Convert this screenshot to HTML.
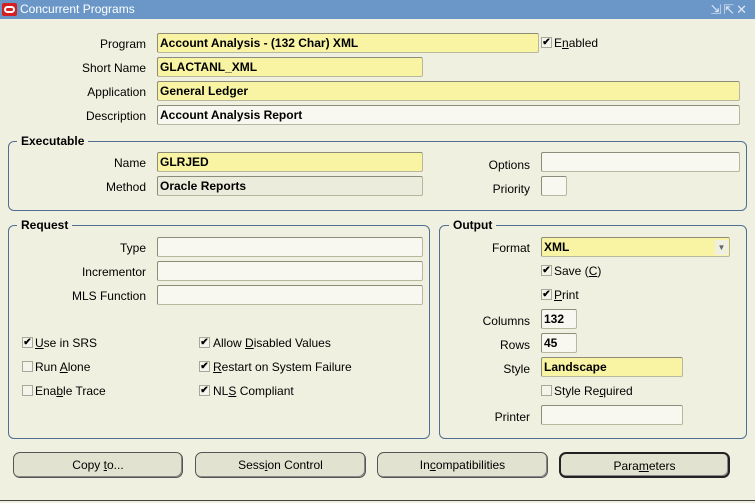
<!DOCTYPE html>
<html><head><style>
*{box-sizing:border-box;margin:0;padding:0}
body{width:755px;height:503px;background:#f0f0e0;font-family:"Liberation Sans",Arial,sans-serif;font-size:12px;color:#000;position:relative;overflow:hidden}
.a{position:absolute}
.title{left:0;top:0;width:755px;height:19px;background:#6a97c7;color:#fff;font-size:12px;line-height:19px;padding-left:20px}
.logo{left:2px;top:3px;width:15px;height:13px;background:#d32020;border-radius:2px}
.logo:after{content:"";position:absolute;left:2px;top:3px;width:11px;height:7px;border:2px solid #fff;border-radius:4px;box-sizing:border-box}
.lbl{text-align:right;width:140px;height:20px;line-height:20px}
.f{height:20px;border:1px solid #b8b8a0;border-top-color:#8c8c78;border-left-color:#8c8c78;background:#f8f8f0;font-weight:bold;padding-left:2px;line-height:18px;border-radius:2px}
.y{background:#f8f4a4}
.g{background:#ececdc}
.box{border:1px solid #4e6f93;border-radius:6px}
.leg{background:#f0f0e0;font-weight:bold;padding:0 4px;line-height:14px}
.cb{width:11px;height:11px;border:1px solid #a8a898;background:#f4f4ea;font-size:10px;line-height:9px;text-align:center;font-weight:bold}
.ct{height:14px;line-height:14px}
.btn{height:26px;top:452px;border:1px solid #555;border-radius:7px;background:#e2e2d0;text-align:center;line-height:24px;box-shadow:inset -1px -1px 0 #888}
u{text-decoration:underline}
</style></head><body>
<div class="a title">Concurrent Programs</div><div class="a logo"></div>
<div class="a" style="right:6px;top:1px;color:#dfe8f2;font-size:13px;line-height:17px;letter-spacing:2px">⇲⇱✕</div>

<div class="a lbl" style="left:6px;top:34px">Program</div>
<div class="a f y" style="left:157px;top:33px;width:382px">Account Analysis - (132 Char) XML</div>
<div class="a cb" style="left:541px;top:37px">✔</div><div class="a ct" style="left:554px;top:36px">E<u>n</u>abled</div>
<div class="a lbl" style="left:6px;top:58px">Short Name</div>
<div class="a f y" style="left:157px;top:57px;width:266px">GLACTANL_XML</div>
<div class="a lbl" style="left:6px;top:82px">Application</div>
<div class="a f y" style="left:157px;top:81px;width:583px">General Ledger</div>
<div class="a lbl" style="left:6px;top:106px">Description</div>
<div class="a f" style="left:157px;top:105px;width:583px">Account Analysis Report</div>

<div class="a box" style="left:8px;top:141px;width:739px;height:70px"></div>
<div class="a leg" style="left:17px;top:134px">Executable</div>
<div class="a lbl" style="left:6px;top:153px">Name</div>
<div class="a f y" style="left:157px;top:152px;width:266px">GLRJED</div>
<div class="a lbl" style="left:6px;top:177px">Method</div>
<div class="a f g" style="left:157px;top:176px;width:266px">Oracle Reports</div>
<div class="a lbl" style="left:390px;top:155px">Options</div>
<div class="a f" style="left:541px;top:152px;width:199px"></div>
<div class="a lbl" style="left:390px;top:179px">Priority</div>
<div class="a f" style="left:541px;top:176px;width:26px"></div>

<div class="a box" style="left:8px;top:225px;width:422px;height:214px"></div>
<div class="a leg" style="left:17px;top:218px">Request</div>
<div class="a lbl" style="left:6px;top:238px">Type</div>
<div class="a f" style="left:157px;top:237px;width:266px"></div>
<div class="a lbl" style="left:6px;top:262px">Incrementor</div>
<div class="a f" style="left:157px;top:261px;width:266px"></div>
<div class="a lbl" style="left:6px;top:286px">MLS Function</div>
<div class="a f" style="left:157px;top:285px;width:266px"></div>
<div class="a cb" style="left:22px;top:337px">✔</div><div class="a ct" style="left:35px;top:336px"><u>U</u>se in SRS</div>
<div class="a cb" style="left:22px;top:361px"></div><div class="a ct" style="left:35px;top:360px">Run <u>A</u>lone</div>
<div class="a cb" style="left:22px;top:385px"></div><div class="a ct" style="left:35px;top:384px">Ena<u>b</u>le Trace</div>
<div class="a cb" style="left:199px;top:337px">✔</div><div class="a ct" style="left:213px;top:336px">Allow <u>D</u>isabled Values</div>
<div class="a cb" style="left:199px;top:361px">✔</div><div class="a ct" style="left:213px;top:360px"><u>R</u>estart on System Failure</div>
<div class="a cb" style="left:199px;top:385px">✔</div><div class="a ct" style="left:213px;top:384px">NL<u>S</u> Compliant</div>

<div class="a box" style="left:439px;top:225px;width:308px;height:214px"></div>
<div class="a leg" style="left:449px;top:218px">Output</div>
<div class="a lbl" style="left:390px;top:238px">Format</div>
<div class="a f y" style="left:541px;top:237px;width:189px">XML</div>
<div class="a" style="left:715px;top:240px;width:13px;height:15px;background:#f0f0e0;color:#666;font-size:8px;line-height:15px;text-align:center">▼</div>
<div class="a cb" style="left:541px;top:265px">✔</div><div class="a ct" style="left:554px;top:264px">Save (<u>C</u>)</div>
<div class="a cb" style="left:541px;top:289px">✔</div><div class="a ct" style="left:554px;top:288px"><u>P</u>rint</div>
<div class="a lbl" style="left:390px;top:311px">Columns</div>
<div class="a f" style="left:541px;top:309px;width:36px">132</div>
<div class="a lbl" style="left:390px;top:335px">Rows</div>
<div class="a f" style="left:541px;top:333px;width:36px">45</div>
<div class="a lbl" style="left:390px;top:359px">Style</div>
<div class="a f y" style="left:541px;top:357px;width:142px">Landscape</div>
<div class="a cb" style="left:541px;top:385px"></div><div class="a ct" style="left:554px;top:384px">Style Re<u>q</u>uired</div>
<div class="a lbl" style="left:390px;top:407px">Printer</div>
<div class="a f" style="left:541px;top:405px;width:142px"></div>

<div class="a btn" style="left:13px;width:170px">Copy <u>t</u>o...</div>
<div class="a btn" style="left:195px;width:171px">Sess<u>i</u>on Control</div>
<div class="a btn" style="left:377px;width:171px">In<u>c</u>ompatibilities</div>
<div class="a btn" style="left:559px;width:171px;border:2px solid #222">Para<u>m</u>eters</div>
<div class="a" style="left:0;top:500px;width:755px;height:3px;border-top:1px solid #444"></div>
</body></html>
